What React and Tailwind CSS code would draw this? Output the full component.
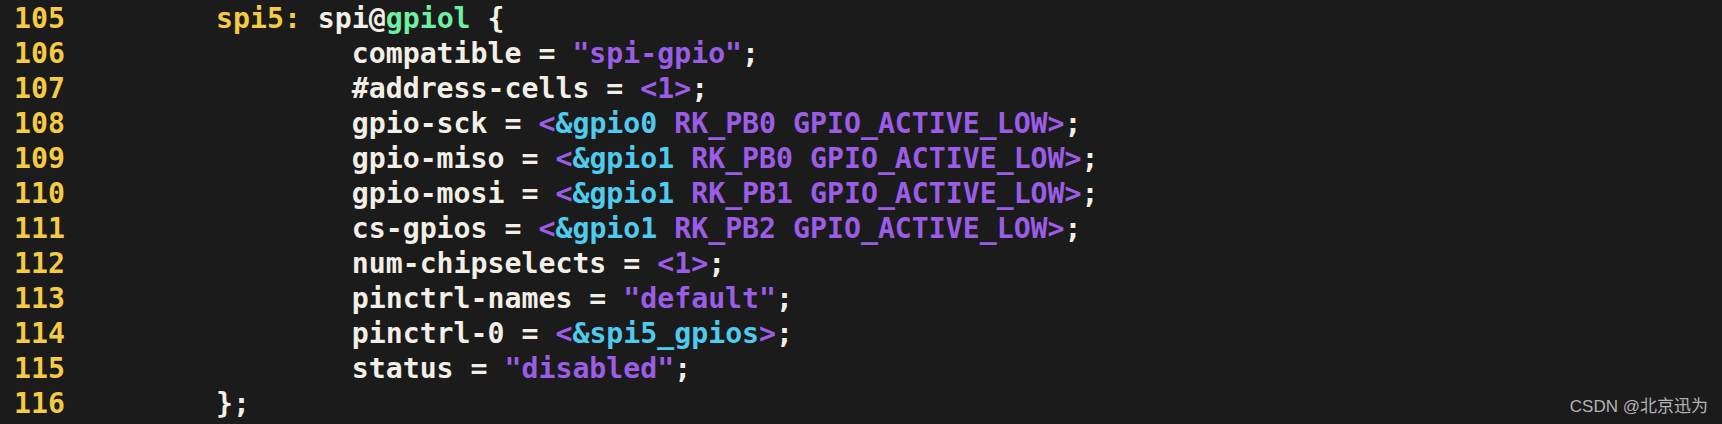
const C = {
  num: 'text-[#f5cb45]',
  key: 'text-[#f5cb45]',
  txt: 'text-[#f2efe6]',
  node: 'text-[#6ef0a2]',
  val: 'text-[#9b5de6]',
  ref: 'text-[#4fcbef]',
};

const lines = [
  {
    n: 105,
    indent: '',
    parts: [
      ['spi5:', C.key],
      [' spi@', C.txt],
      ['gpiol', C.node],
      [' {', C.txt],
    ],
  },
  { n: 106, indent: '        ', parts: [['compatible = ', C.txt], ['"spi-gpio"', C.val], [';', C.txt]] },
  { n: 107, indent: '        ', parts: [['#address-cells = ', C.txt], ['<1>', C.val], [';', C.txt]] },
  {
    n: 108,
    indent: '        ',
    parts: [['gpio-sck = ', C.txt], ['<', C.val], ['&gpio0', C.ref], [' RK_PB0 GPIO_ACTIVE_LOW>', C.val], [';', C.txt]],
  },
  {
    n: 109,
    indent: '        ',
    parts: [['gpio-miso = ', C.txt], ['<', C.val], ['&gpio1', C.ref], [' RK_PB0 GPIO_ACTIVE_LOW>', C.val], [';', C.txt]],
  },
  {
    n: 110,
    indent: '        ',
    parts: [['gpio-mosi = ', C.txt], ['<', C.val], ['&gpio1', C.ref], [' RK_PB1 GPIO_ACTIVE_LOW>', C.val], [';', C.txt]],
  },
  {
    n: 111,
    indent: '        ',
    parts: [['cs-gpios = ', C.txt], ['<', C.val], ['&gpio1', C.ref], [' RK_PB2 GPIO_ACTIVE_LOW>', C.val], [';', C.txt]],
  },
  { n: 112, indent: '        ', parts: [['num-chipselects = ', C.txt], ['<1>', C.val], [';', C.txt]] },
  { n: 113, indent: '        ', parts: [['pinctrl-names = ', C.txt], ['"default"', C.val], [';', C.txt]] },
  {
    n: 114,
    indent: '        ',
    parts: [['pinctrl-0 = ', C.txt], ['<', C.val], ['&spi5_gpios', C.ref], ['>', C.val], [';', C.txt]],
  },
  { n: 115, indent: '        ', parts: [['status = ', C.txt], ['"disabled"', C.val], [';', C.txt]] },
  { n: 116, indent: '', parts: [['};', C.txt]] },
];

export default function App() {
  return (
    <div className="relative h-[424px] w-[1722px] overflow-hidden bg-[#1b1b1b] pt-[1px] pl-[14px]">
      <div className="flex flex-col font-['DejaVu_Sans_Mono',monospace] text-[28.2px] leading-[35px] font-bold">
        {lines.map((l) => (
          <div key={l.n} className="flex whitespace-pre">
            <span className={`w-[202px] shrink-0 ${C.num}`}>{l.n}</span>
            <span>
              {l.indent}
              {l.parts.map(([t, cls], i) => (
                <span key={i} className={cls}>
                  {t}
                </span>
              ))}
            </span>
          </div>
        ))}
      </div>
      <span className="absolute right-[14px] bottom-[9px] font-['Liberation_Sans','Noto_Sans_CJK_SC',sans-serif] text-[17px] leading-none text-[#b4b4b4]">
        CSDN @北京迅为
      </span>
    </div>
  );
}
